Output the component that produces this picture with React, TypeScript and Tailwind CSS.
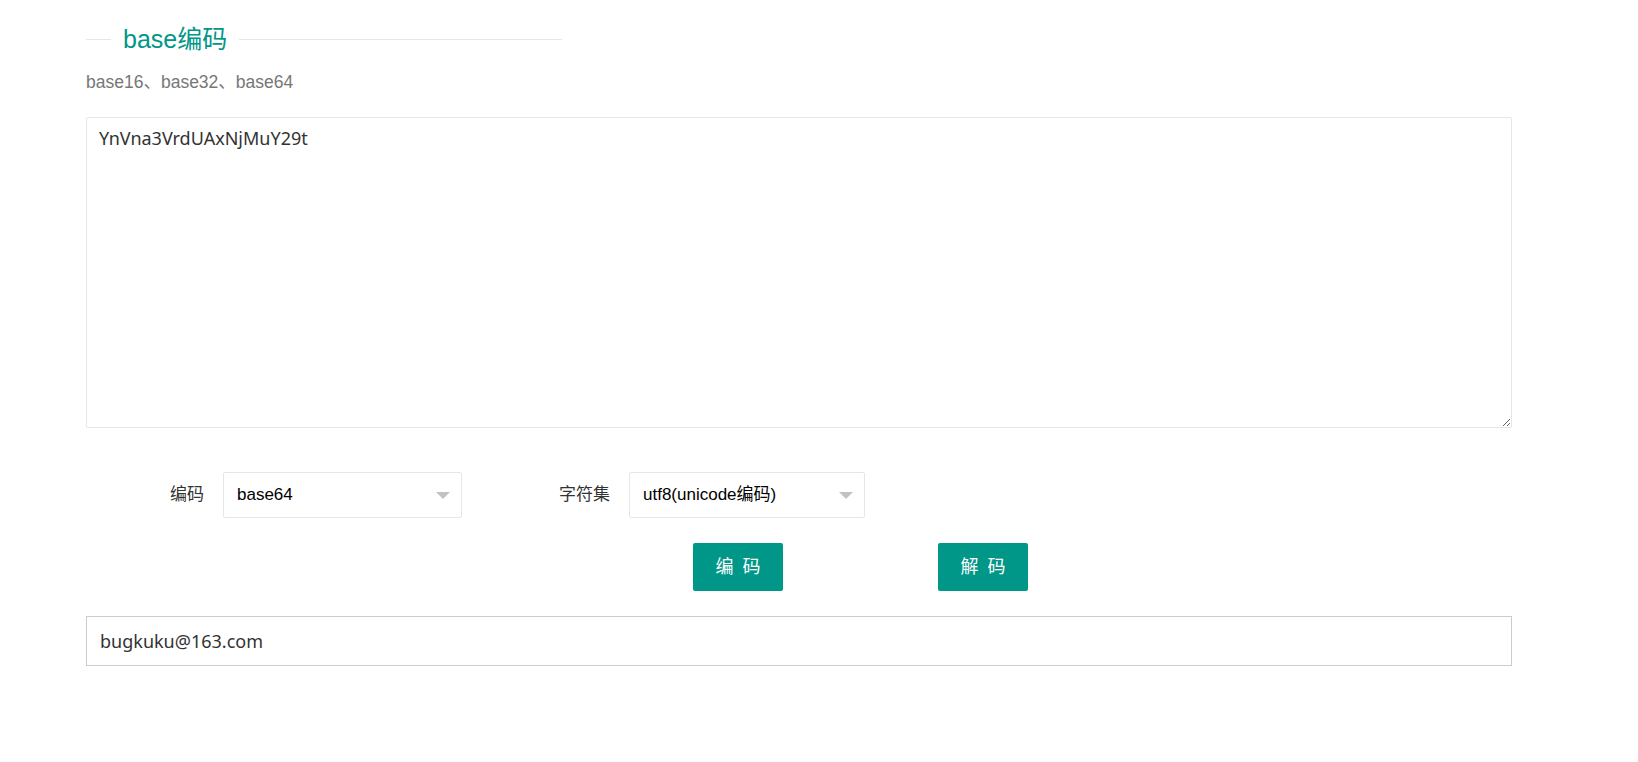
import React, { useState } from "react";

const cjk = '"Liberation Sans", "Noto Sans CJK SC", sans-serif';
const ui = '"Noto Sans", "Noto Sans CJK SC", sans-serif';

function Select({ value, width }: { value: string; width: string }) {
  return (
    <div
      className={`relative flex h-[46px] items-center rounded-[2px] border border-[#e6e6e6] bg-white pl-[13px] text-[17px] text-black ${width}`}
    >
      <span>{value}</span>
      <span className="absolute right-[11px] top-[19px] h-0 w-0 border-x-[7px] border-t-[7px] border-x-transparent border-t-[#c2c2c2]" />
    </div>
  );
}

export default function App() {
  const [input, setInput] = useState("YnVna3VrdUAxNjMuY29t");

  return (
    <div className="min-h-[762px] bg-white pl-[86px]" style={{ fontFamily: cjk }}>
      {/* title */}
      <div className="flex h-[78px] w-[476px] items-start pt-[24px]">
        <div className="flex w-full items-center">
          <div className="h-px w-[25px] bg-[#e6e6e6]" />
          <span className="px-[12px] text-[25px] font-normal leading-[30px] text-[#009688]">
            base编码
          </span>
          <div className="h-px flex-1 bg-[#e6e6e6]" />
        </div>
      </div>
      <p className="-mt-[8px] text-[17.5px] leading-[24px] text-[#777]">base16、base32、base64</p>

      <textarea
        value={input}
        onChange={(e) => setInput(e.target.value)}
        className="mt-[23px] block h-[311px] w-[1426px] rounded-[2px] border border-[#e6e6e6] px-[12px] py-[7px] text-[18px] leading-[26px] text-[#333] outline-none"
        style={{ fontFamily: ui }}
      />

      {/* options */}
      <div className="mt-[44px] flex items-center text-[17px] text-[#333]">
        <label className="w-[137px] pr-[19px] text-right">编码</label>
        <Select value="base64" width="w-[239px]" />
        <label className="ml-[30px] w-[137px] pr-[19px] text-right">字符集</label>
        <Select value="utf8(unicode编码)" width="w-[236px]" />
      </div>

      <div className="mt-[25px] flex pl-[607px]">
        <button className="h-[48px] w-[90px] rounded-[2px] bg-[#009688] pl-[2px] text-[18px] tracking-[2px] text-white">
          编 码
        </button>
        <button className="ml-[155px] h-[48px] w-[90px] rounded-[2px] bg-[#009688] pl-[2px] text-[18px] tracking-[2px] text-white">
          解 码
        </button>
      </div>

      <input
        readOnly
        value="bugkuku@163.com"
        className="mt-[25px] block h-[50px] w-[1426px] border border-[#ccc] px-[13px] text-[18px] text-[#333] outline-none"
        style={{ fontFamily: ui }}
      />
    </div>
  );
}
